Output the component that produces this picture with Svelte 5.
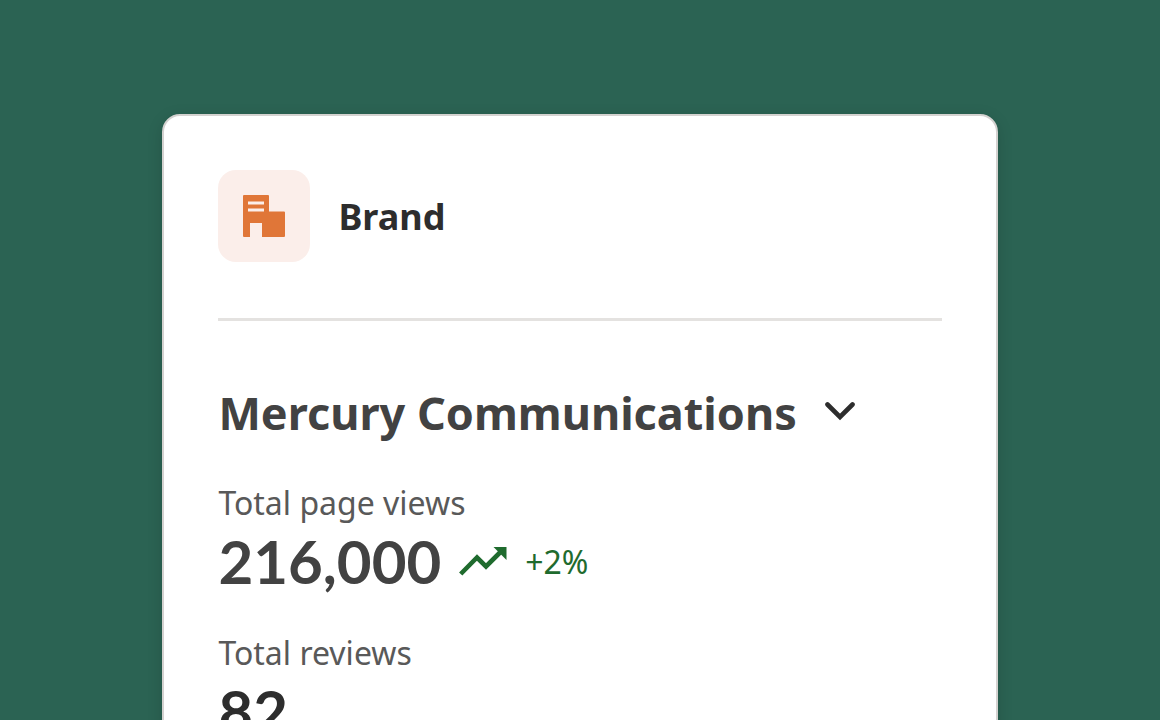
<script>
  const stats = [
    { label: 'Total page views', value: '216,000', change: '+2%' },
    { label: 'Total reviews', value: '82', strong: true }
  ];
  let open = $state(false);
</script>

<main class="page">
  <section class="card">
    <header class="card-header">
      <span class="badge">
        <svg viewBox="0 0 42 42" width="42" height="42" aria-hidden="true">
          <path
            fill="#e07638"
            fill-rule="evenodd"
            d="M1 0H25Q26 0 26 1V16.500H41Q42 16.500 42 17.500V41Q42 42 41 42H19V28H7V42H1Q0 42 0 41V1Q0 0 1 0ZM5 6.500V9.500H21V6.500ZM5 13.500V16.500H21V13.500Z"
          />
        </svg>
      </span>
      <h1>Brand</h1>
    </header>

    <h2>
      <button type="button" class="company" aria-expanded={open} onclick={() => (open = !open)}>
        Mercury Communications
        <svg class="chevron" viewBox="0 0 30 20" width="30" height="20" aria-hidden="true">
          <path d="M2.500 3.500L15 16L27.500 3.500" fill="none" stroke="#2d2d2d" stroke-width="4.600" stroke-linecap="round" />
        </svg>
      </button>
    </h2>

    <dl class="stats">
      {#each stats as stat}
        <div class="stat">
          <dt>{stat.label}</dt>
          <dd class:strong={stat.strong}>
            <span class="value">{stat.value}</span>
            {#if stat.change}
              <svg viewBox="0 0 48 30" width="48" height="30" aria-hidden="true">
                <path d="M1.700 28L18 11.500L27 20.500L41 6.500" fill="none" stroke="#1f6b2e" stroke-width="4.600" />
                <path d="M34.500 1H47.500V14Z" fill="#1f6b2e" />
              </svg>
              <span class="change">{stat.change}</span>
            {/if}
          </dd>
        </div>
      {/each}
    </dl>
  </section>
</main>

<style>
  :global(body) {
    margin: 0;
  }
  .page {
    box-sizing: border-box;
    height: 100vh;
    overflow: hidden;
    padding: 114px 14% 0;
    background: #2b6353;
    font-family: 'Noto Sans', sans-serif;
    color: #424242;
  }
  .card {
    box-sizing: border-box;
    border: 2px solid #d4d2d0;
    border-radius: 18px;
    padding: 54px;
    background: #fff;
    box-shadow: 0 4px 16px rgba(0, 0, 0, 0.14);
  }
  .card-header {
    display: flex;
    align-items: center;
    gap: 28px;
    padding-bottom: 56px;
    border-bottom: 3px solid #e4e2e0;
  }
  .badge {
    display: grid;
    place-items: center;
    width: 92px;
    height: 92px;
    border-radius: 18px;
    background: #fbeeea;
  }
  h1,
  h2,
  dl,
  dd {
    margin: 0;
  }
  h1 {
    padding-top: 2px;
    font-size: 36px;
    line-height: 48px;
    font-weight: 700;
    color: #2d2d2d;
  }
  h2 {
    margin-top: 62px;
  }
  .company {
    display: flex;
    align-items: center;
    gap: 28px;
    padding: 0;
    border: 0;
    background: none;
    color: inherit;
    font: 700 45px/60px 'Noto Sans', sans-serif;
    white-space: nowrap;
    cursor: pointer;
  }
  .chevron {
    padding-bottom: 4px;
  }
  .stats {
    display: grid;
    gap: 34px;
    margin-top: 38px;
  }
  dt {
    font-size: 32px;
    line-height: 44px;
    color: #595959;
  }
  dd {
    display: flex;
    align-items: center;
    gap: 18px;
  }
  .strong {
    color: #2d2d2d;
  }
  .value {
    font-family: Lato, sans-serif;
    font-size: 60px;
    line-height: 72px;
    font-weight: 700;
  }
  .change {
    font-size: 32px;
    color: #1f6b2e;
  }
</style>
